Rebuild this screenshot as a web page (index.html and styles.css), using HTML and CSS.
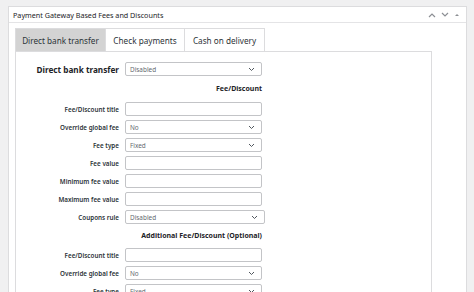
FILE: index.html
```html
<!DOCTYPE html>
<html lang="en">
<head>
    <meta charset="UTF-8">
    <meta name="viewport" content="width=device-width, initial-scale=1.0">
    <title>Payment Gateway Based Fees and Discounts</title>
    <link rel="stylesheet" href="styles.css">
</head>
<body>
    <div class="postbox">
        <div class="postbox-header">
            <h2>Payment Gateway Based Fees and Discounts</h2>
            <div class="handle-actions">
                <svg width="8" height="6" viewBox="0 0 8 6"><path d="M1 5 L4 2 L7 5" fill="none" stroke="#8c8f94" stroke-width="1.2"/></svg>
                <svg width="8" height="6" viewBox="0 0 8 6"><path d="M1 1 L4 4 L7 1" fill="none" stroke="#8c8f94" stroke-width="1.2"/></svg>
                <svg width="6" height="6" viewBox="0 0 6 6"><path d="M1 4 L3 2 L5 4 Z" fill="#8c8f94"/></svg>
            </div>
        </div>

        <div class="inside">
            <div class="tabs">
                <a class="tab active">Direct bank transfer</a>
                <a class="tab">Check payments</a>
                <a class="tab">Cash on delivery</a>
            </div>

            <div class="tab-panel">
                <div class="form-grid">
                    <label class="main-label">Direct bank transfer</label>
                    <div class="select"><span>Disabled</span><svg width="7" height="5" viewBox="0 0 7 5"><path d="M1 1 L3.5 3.5 L6 1" fill="none" stroke="#50575e" stroke-width="1"/></svg></div>

                    <h3 class="group-title first">Fee/Discount</h3>

                    <label>Fee/Discount title</label>
                    <div class="input"></div>

                    <label>Override global fee</label>
                    <div class="select"><span>No</span><svg width="7" height="5" viewBox="0 0 7 5"><path d="M1 1 L3.5 3.5 L6 1" fill="none" stroke="#50575e" stroke-width="1"/></svg></div>

                    <label>Fee type</label>
                    <div class="select"><span>Fixed</span><svg width="7" height="5" viewBox="0 0 7 5"><path d="M1 1 L3.5 3.5 L6 1" fill="none" stroke="#50575e" stroke-width="1"/></svg></div>

                    <label>Fee value</label>
                    <div class="input"></div>

                    <label>Minimum fee value</label>
                    <div class="input"></div>

                    <label>Maximum fee value</label>
                    <div class="input"></div>

                    <label>Coupons rule</label>
                    <div class="select wide"><span>Disabled</span><svg width="7" height="5" viewBox="0 0 7 5"><path d="M1 1 L3.5 3.5 L6 1" fill="none" stroke="#50575e" stroke-width="1"/></svg></div>

                    <h3 class="group-title">Additional Fee/Discount (Optional)</h3>

                    <label>Fee/Discount title</label>
                    <div class="input"></div>

                    <label>Override global fee</label>
                    <div class="select"><span>No</span><svg width="7" height="5" viewBox="0 0 7 5"><path d="M1 1 L3.5 3.5 L6 1" fill="none" stroke="#50575e" stroke-width="1"/></svg></div>

                    <label>Fee type</label>
                    <div class="select"><span>Fixed</span><svg width="7" height="5" viewBox="0 0 7 5"><path d="M1 1 L3.5 3.5 L6 1" fill="none" stroke="#50575e" stroke-width="1"/></svg></div>
                </div>
            </div>
        </div>
    </div>
</body>
</html>
```

FILE: styles.css
```css
* {
    margin: 0;
    padding: 0;
    box-sizing: border-box;
}

html, body {
    height: 100%;
    overflow: hidden;
}

body {
    background: #f0f0f1;
    font-family: "Noto Sans", "Open Sans", sans-serif;
    color: #1d2327;
    padding: 6px 7px 0 8px;
}

.postbox {
    background: #fff;
    border: 1px solid #dcdcde;
    height: 300px;
}

.postbox-header {
    display: flex;
    align-items: center;
    justify-content: space-between;
    height: 16px;
    border-bottom: 1px solid #e4e4e6;
    padding: 0 6px 0 4px;
}

.postbox-header h2 {
    font-size: 7.2px;
    font-weight: 400;
    color: #1d2327;
}

.handle-actions {
    display: flex;
    align-items: center;
    gap: 5px;
}

.inside {
    padding: 5px 0 0 6px;
}

.tabs {
    display: flex;
}

.tab {
    height: 23px;
    display: flex;
    align-items: center;
    justify-content: center;
    white-space: nowrap;
    font-size: 8.2px;
    color: #2c3338;
    background: #fff;
    border: 1px solid #dcdcde;
    border-bottom: none;
    border-left: none;
}

.tab:first-child {
    border-left: 1px solid #dcdcde;
}

.tab.active {
    background: #d3d3d3;
}

.tab:nth-child(1) { width: 91px; }
.tab:nth-child(2) { width: 79px; }
.tab:nth-child(3) { width: 80px; }

.tab-panel {
    width: 417px;
    height: 260px;
    border: 1px solid #dcdcde;
    padding-top: 10px;
}

.form-grid {
    display: grid;
    grid-template-columns: 103px 137px;
    column-gap: 6px;
    row-gap: 4px;
    align-items: center;
}

.form-grid label {
    text-align: right;
    font-size: 6.3px;
    font-weight: 600;
    color: #2c3338;
}

.form-grid .main-label {
    font-size: 8.2px;
    font-weight: 700;
    color: #1d2327;
}

.group-title {
    grid-column: 1 / 3;
    text-align: right;
    font-size: 7px;
    font-weight: 700;
    color: #1d2327;
    height: 16px;
    line-height: 16px;
}

.group-title.first {
    height: 18px;
    line-height: 18px;
}

.input,
.select {
    height: 14px;
    border: 1px solid #c3c4c7;
    border-radius: 2px;
    background: #fff;
}

.select {
    display: flex;
    align-items: center;
    justify-content: space-between;
    padding: 0 6px 0 4px;
    font-size: 6.4px;
    color: #646970;
}

.select.wide {
    width: 140px;
}
```
